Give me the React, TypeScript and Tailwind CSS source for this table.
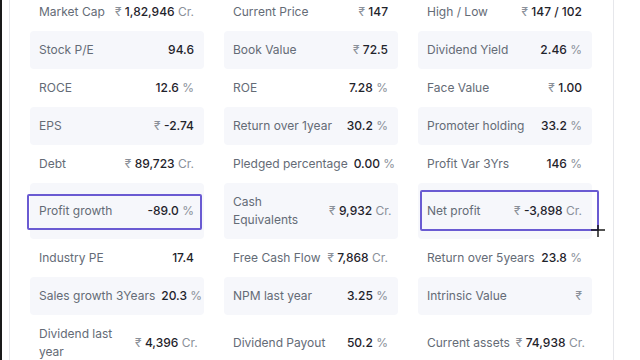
import React from "react";

type Item = { label: string; pre?: string; num: string; suf?: string; hl?: "a" | "b"; wrap?: boolean };

const rows: Item[][] = [
  [
    { label: "Market Cap", pre: "₹", num: "1,82,946", suf: "Cr." },
    { label: "Current Price", pre: "₹", num: "147" },
    { label: "High / Low", pre: "₹", num: "147 / 102" },
  ],
  [
    { label: "Stock P/E", num: "94.6" },
    { label: "Book Value", pre: "₹", num: "72.5" },
    { label: "Dividend Yield", num: "2.46", suf: "%" },
  ],
  [
    { label: "ROCE", num: "12.6", suf: "%" },
    { label: "ROE", num: "7.28", suf: "%" },
    { label: "Face Value", pre: "₹", num: "1.00" },
  ],
  [
    { label: "EPS", pre: "₹", num: "-2.74" },
    { label: "Return over 1year", num: "30.2", suf: "%" },
    { label: "Promoter holding", num: "33.2", suf: "%" },
  ],
  [
    { label: "Debt", pre: "₹", num: "89,723", suf: "Cr." },
    { label: "Pledged percentage", num: "0.00", suf: "%" },
    { label: "Profit Var 3Yrs", num: "146", suf: "%" },
  ],
  [
    { label: "Profit growth", num: "-89.0", suf: "%", hl: "a" },
    { label: "Cash Equivalents", pre: "₹", num: "9,932", suf: "Cr.", wrap: true },
    { label: "Net profit", pre: "₹", num: "-3,898", suf: "Cr.", hl: "b" },
  ],
  [
    { label: "Industry PE", num: "17.4" },
    { label: "Free Cash Flow", pre: "₹", num: "7,868", suf: "Cr." },
    { label: "Return over 5years", num: "23.8", suf: "%" },
  ],
  [
    { label: "Sales growth 3Years", num: "20.3", suf: "%" },
    { label: "NPM last year", num: "3.25", suf: "%" },
    { label: "Intrinsic Value", pre: "₹", num: "" },
  ],
  [
    { label: "Dividend last year", pre: "₹", num: "4,396", suf: "Cr.", wrap: true },
    { label: "Dividend Payout", num: "50.2", suf: "%" },
    { label: "Current assets", pre: "₹", num: "74,938", suf: "Cr." },
  ],
];

function Cell({ it, shaded }: { it: Item; shaded: boolean }) {
  return (
    <div
      className={
        shaded
          ? "relative flex items-center justify-between gap-[6px] pl-[9px] pr-[10px] py-[10px] leading-[18px] rounded-[4px] bg-[#f6f7fb]"
          : "relative flex items-center justify-between gap-[6px] pl-[9px] pr-[10px] py-[10px] leading-[18px] rounded-[4px]"
      }
    >
      <span
        className={
          it.wrap
            ? "text-[#646b76] w-[90px] shrink-0"
            : "text-[#646b76] whitespace-nowrap"
        }
      >
        {it.label}
      </span>
      <span className="shrink-0 whitespace-nowrap">
        {it.pre && <span className="text-[#8a9099]">{it.pre} </span>}
        {it.num && <span className="font-medium text-[#1f232b]">{it.num}</span>}
        {it.suf && <span className="text-[#8a9099]"> {it.suf}</span>}
      </span>
      {it.hl === "a" && (
        <div className="absolute left-[-3px] right-[2px] top-[11px] bottom-[9px] border-2 border-[#6a5bd2] rounded-[2px]" />
      )}
      {it.hl === "b" && (
        <>
          <div className="absolute left-[2px] right-[-7px] top-[7px] bottom-[8px] border-2 border-[#6a5bd2] rounded-[2px]" />
          <svg
            className="absolute right-[-14px] bottom-[1px]"
            width="16"
            height="14"
            viewBox="0 0 16 14"
          >
            <path d="M8 1V13M1 6H15" stroke="#1a1a1a" strokeWidth="1.5" />
          </svg>
        </>
      )}
    </div>
  );
}

export default function App() {
  return (
    <div
      className="w-[640px] h-[360px] overflow-hidden bg-white flex text-[12px]"
      style={{ fontFamily: "Inter, 'Noto Sans', sans-serif" }}
    >
      <div className="w-[2px] bg-[#1a1a1a] shrink-0" />
      <div className="w-[7px] shrink-0" />
      <div className="w-[605px] shrink-0 border-l border-r border-[#e6e7eb] pl-[20px]">
        <div className="-mt-[7px] grid grid-cols-[174px_174px_174px] gap-x-[20px]">
          {rows.map((r, ri) =>
            r.map((it, ci) => <Cell key={ri + "-" + ci} it={it} shaded={ri % 2 === 1} />)
          )}
        </div>
      </div>
    </div>
  );
}
